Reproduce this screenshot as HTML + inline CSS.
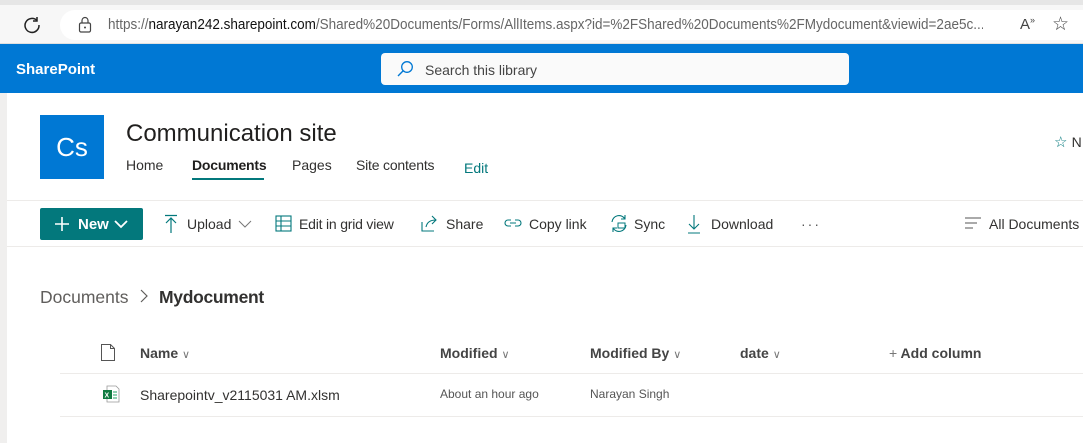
<!DOCTYPE html>
<html><head><meta charset="utf-8"><style>
*{margin:0;padding:0;box-sizing:border-box}
body{width:1083px;height:443px;overflow:hidden;background:#fff;font-family:"Liberation Sans",sans-serif;position:relative;color:#323130}
.a{position:absolute;white-space:nowrap}
svg{position:absolute}
</style></head><body>
<div class="a" style="left:0;top:0;width:1083px;height:6px;background:#e6e6e6"></div>
<div class="a" style="left:0;top:5px;width:1083px;height:39px;background:#f7f7f7;border-bottom:1px solid #e0e0e0"></div>
<div class="a" style="left:60px;top:10px;width:1040px;height:30px;background:#fff;border-radius:15px"></div>
<svg style="left:22px;top:15px" width="20" height="20" viewBox="0 0 20 20"><path d="M15 5.5A7 7 0 1 0 17 10" fill="none" stroke="#222" stroke-width="1.5"/><path d="M15 2v4h-4" fill="none" stroke="#222" stroke-width="1.5"/></svg>
<svg style="left:78px;top:16px" width="14" height="17" viewBox="0 0 14 17"><rect x="1.5" y="7" width="11" height="9" rx="1.5" fill="none" stroke="#444" stroke-width="1.2"/><path d="M4 7V4.5a3 3 0 0 1 6 0V7" fill="none" stroke="#444" stroke-width="1.2"/><circle cx="7" cy="11.5" r="1" fill="#444"/></svg>
<div class="a" style="left:108px;top:16px;width:875px;overflow:hidden"><div style="font-size:15px;color:#666;transform:scaleX(0.9);transform-origin:0 0">https://<span style="color:#111">narayan242.sharepoint.com</span>/Shared%20Documents/Forms/AllItems.aspx?id=%2FShared%20Documents%2FMydocument&amp;viewid=2ae5c...</div></div>
<div class="a" style="left:1020px;top:15px;font-size:15px;color:#444">A<sup style="font-size:9px">»</sup></div>
<div class="a" style="left:1052px;top:13px;font-size:19px;color:#444">☆</div>
<div class="a" style="left:0;top:44px;width:1083px;height:49px;background:#0078d4"></div>
<div class="a" style="left:16px;top:61px;font-size:15px;font-weight:bold;color:#fff">SharePoint</div>
<div class="a" style="left:381px;top:53px;width:468px;height:32px;background:#fafafa;border-radius:4px"></div>
<svg style="left:396px;top:60px" width="18" height="18" viewBox="0 0 18 18"><circle cx="11" cy="7" r="5.3" fill="none" stroke="#0078d4" stroke-width="1.3"/><path d="M7.2 10.8L2 16" stroke="#0078d4" stroke-width="1.4"/></svg>
<div class="a" style="left:425px;top:62px;font-size:14px;color:#444">Search this library</div>
<div class="a" style="left:0;top:93px;width:7px;height:350px;background:#f0efee"></div>
<div class="a" style="left:40px;top:115px;width:64px;height:64px;background:#0078d4;color:#fff;font-size:26px;text-align:center;line-height:64px">Cs</div>
<div class="a" style="left:126px;top:120px;font-size:24px;color:#201f1e">Communication site</div>
<div class="a" style="left:126px;top:157px;font-size:14px">Home</div>
<div class="a" style="left:192px;top:157px;font-size:14px;font-weight:bold;color:#201f1e;letter-spacing:-0.2px">Documents</div>
<div class="a" style="left:192px;top:178px;width:72px;height:2px;background:#03787c"></div>
<div class="a" style="left:292px;top:157px;font-size:14px">Pages</div>
<div class="a" style="left:356px;top:157px;font-size:14px;letter-spacing:-0.2px">Site contents</div>
<div class="a" style="left:464px;top:160px;font-size:14px;color:#03787c">Edit</div>
<div class="a" style="left:1054px;top:133px;font-size:15px;color:#03787c">☆ <span style="color:#323130;font-size:14px">N</span></div>
<div class="a" style="left:7px;top:200px;width:1076px;height:1px;background:#edebe9"></div>
<div class="a" style="left:7px;top:246px;width:1076px;height:1px;background:#edebe9"></div>
<div class="a" style="left:40px;top:208px;width:103px;height:32px;background:#03787c;border-radius:2px"></div>
<svg style="left:54px;top:216px" width="16" height="16" viewBox="0 0 16 16"><path d="M8 1v14M1 8h14" stroke="#fff" stroke-width="1.6"/></svg>
<div class="a" style="left:78px;top:216px;font-size:15px;font-weight:bold;color:#fff">New</div>
<svg style="left:114px;top:219px" width="14" height="10" viewBox="0 0 14 10"><path d="M1 2l6 6 6-6" fill="none" stroke="#fff" stroke-width="1.8"/></svg>
<svg style="left:163px;top:214px" width="16" height="20" viewBox="0 0 16 20"><path d="M2 1.5h12M8 4v15M3 9l5-5 5 5" fill="none" stroke="#03787c" stroke-width="1.2"/></svg>
<div class="a" style="left:187px;top:216px;font-size:14px">Upload</div>
<svg style="left:238px;top:220px" width="14" height="9" viewBox="0 0 14 9"><path d="M1 1l6 6 6-6" fill="none" stroke="#777" stroke-width="1"/></svg>
<svg style="left:275px;top:215px" width="17" height="17" viewBox="0 0 17 17"><rect x="1" y="1" width="15" height="15" fill="none" stroke="#03787c" stroke-width="1.1"/><path d="M1 6h15M1 11h15M6 1v15" stroke="#03787c" stroke-width="1.1"/></svg>
<div class="a" style="left:299px;top:216px;font-size:14px;letter-spacing:-0.2px">Edit in grid view</div>
<svg style="left:421px;top:215px" width="18" height="17" viewBox="0 0 18 17"><path d="M1 7v9h12M5 12c1-5 5-7 10-7M11 1l4 4-4 4" fill="none" stroke="#03787c" stroke-width="1.1"/></svg>
<div class="a" style="left:446px;top:216px;font-size:14px">Share</div>
<svg style="left:504px;top:217px" width="18" height="12" viewBox="0 0 18 12"><path d="M7 3H4a3 3 0 0 0 0 6h3M11 3h3a3 3 0 0 1 0 6h-3M6 6h6" fill="none" stroke="#03787c" stroke-width="1.1"/></svg>
<div class="a" style="left:529px;top:216px;font-size:14px">Copy link</div>
<svg style="left:609px;top:214px" width="20" height="19" viewBox="0 0 20 19"><path d="M3 8a7 7 0 0 1 13-3M17 11a7 7 0 0 1-13 3M16 1v4h-4M4 18v-4h4" fill="none" stroke="#03787c" stroke-width="1.1"/><rect x="9" y="9" width="7" height="5" fill="none" stroke="#03787c"/></svg>
<div class="a" style="left:634px;top:216px;font-size:14px">Sync</div>
<svg style="left:687px;top:214px" width="14" height="20" viewBox="0 0 14 20"><path d="M7 1v14M2 10l5 5 5-5M1 19h12" fill="none" stroke="#03787c" stroke-width="1.1"/></svg>
<div class="a" style="left:711px;top:216px;font-size:14px">Download</div>
<div class="a" style="left:801px;top:216px;font-size:14px;letter-spacing:2px;color:#555">···</div>
<svg style="left:964px;top:217px" width="18" height="13" viewBox="0 0 18 13"><path d="M1 1h16M1 6h12M1 11h8" stroke="#555" stroke-width="1.1"/></svg>
<div class="a" style="left:989px;top:216px;font-size:14px">All Documents</div>
<div class="a" style="left:40px;top:287px;font-size:17.5px;color:#605e5c">Documents</div>
<svg style="left:139px;top:289px" width="10" height="14" viewBox="0 0 10 14"><path d="M2 1l6 6-6 6" fill="none" stroke="#605e5c" stroke-width="1.2"/></svg>
<div class="a" style="left:159px;top:287px;font-size:17.5px;font-weight:bold;color:#323130;letter-spacing:-0.3px">Mydocument</div>
<svg style="left:100px;top:343px" width="16" height="19" viewBox="0 0 16 19"><path d="M1.5 1.5h9l4 4v12h-13z M10.5 1.5v4h4" fill="none" stroke="#555" stroke-width="1"/></svg>
<div class="a" style="left:140px;top:345px;font-size:14px;font-weight:bold;color:#444">Name <span style="font-weight:normal;color:#777;font-size:11px">∨</span></div>
<div class="a" style="left:440px;top:345px;font-size:14px;font-weight:bold;color:#444">Modified <span style="font-weight:normal;color:#777;font-size:11px">∨</span></div>
<div class="a" style="left:590px;top:345px;font-size:14px;font-weight:bold;color:#444">Modified By <span style="font-weight:normal;color:#777;font-size:11px">∨</span></div>
<div class="a" style="left:740px;top:345px;font-size:14px;font-weight:bold;color:#444">date <span style="font-weight:normal;color:#777;font-size:11px">∨</span></div>
<div class="a" style="left:889px;top:345px;font-size:14px;font-weight:bold;color:#444"><span style="font-weight:normal;color:#777">+</span> Add column</div>
<div class="a" style="left:60px;top:373px;width:1023px;height:1px;background:#edebe9"></div>
<div class="a" style="left:60px;top:416px;width:1023px;height:1px;background:#edebe9"></div>
<svg style="left:102px;top:385px" width="18" height="18" viewBox="0 0 18 18"><path d="M5 1h9l3 3v13H5z" fill="#fff" stroke="#999" stroke-width="0.8"/><path d="M11 7h4M11 10h4M11 13h4" stroke="#21a366"/><rect x="1" y="5" width="9" height="9" fill="#107c41"/><text x="2.5" y="12.5" font-size="7" font-weight="bold" fill="#fff" font-family="Liberation Sans">X</text></svg>
<div class="a" style="left:140px;top:387px;font-size:14px">Sharepointv_v2115031 AM.xlsm</div>
<div class="a" style="left:440px;top:387px;font-size:12px;color:#555">About an hour ago</div>
<div class="a" style="left:590px;top:387px;font-size:12px;color:#555">Narayan Singh</div>
</body></html>
